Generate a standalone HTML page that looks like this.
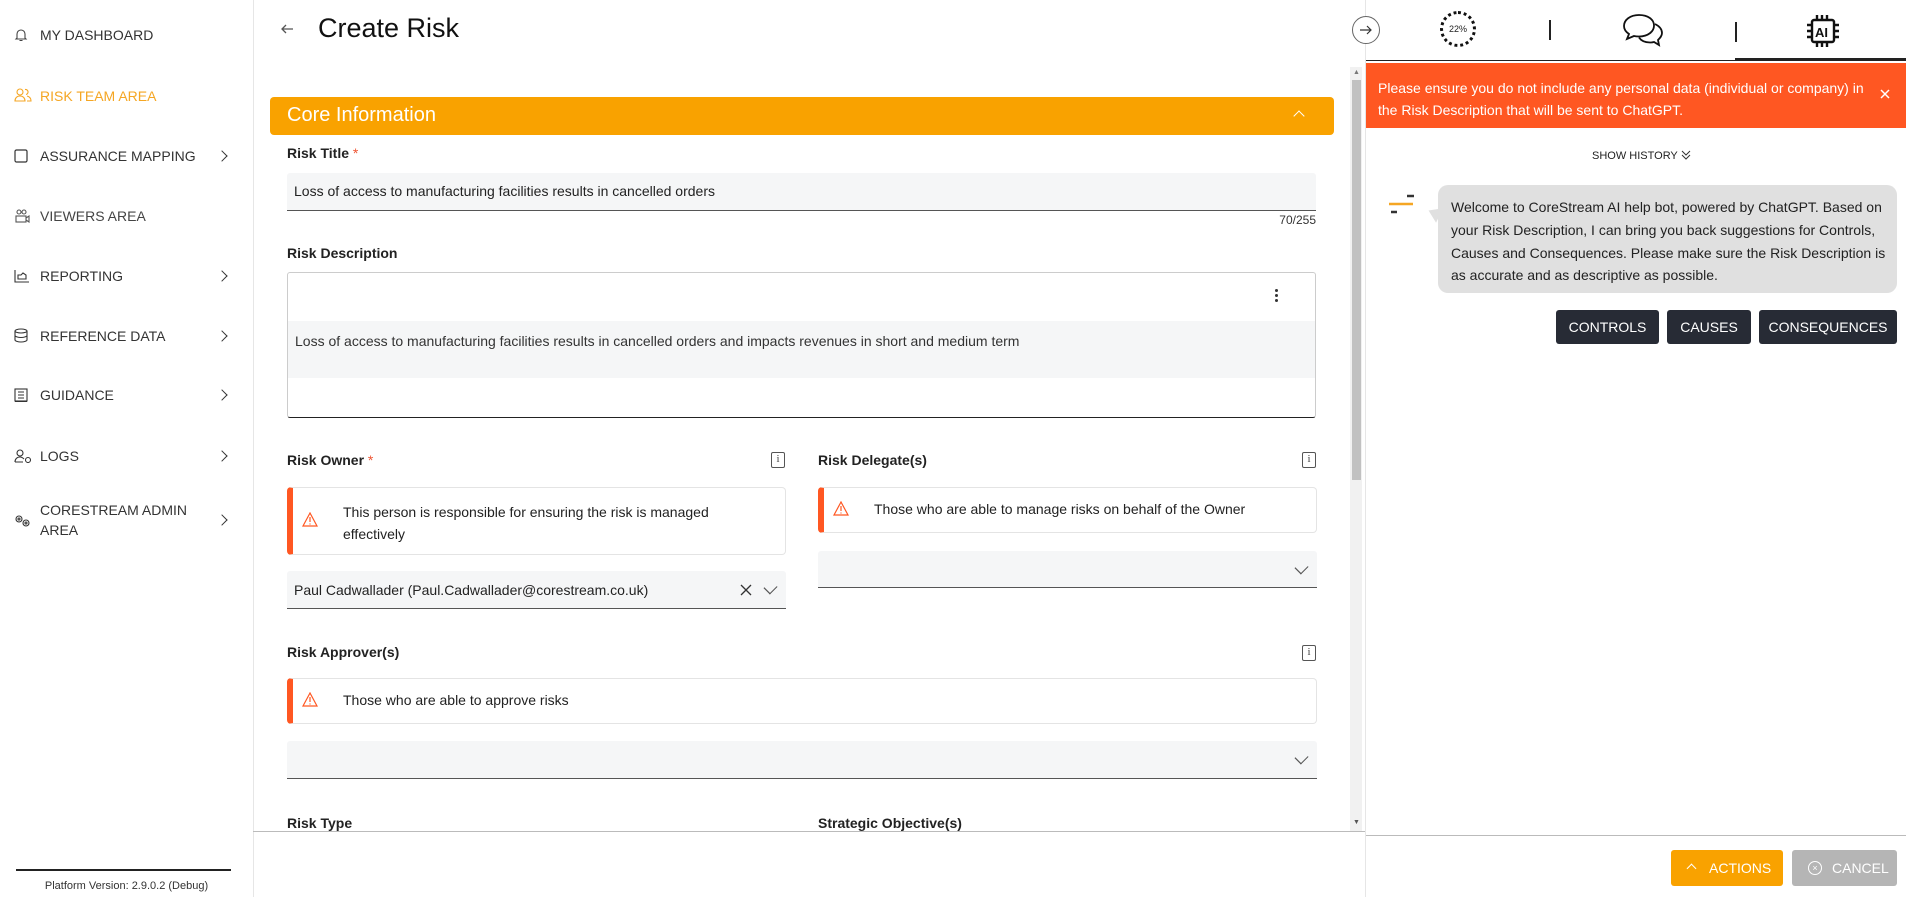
<!DOCTYPE html>
<html><head><meta charset="utf-8"><style>
*{box-sizing:border-box;margin:0;padding:0}
body{width:1906px;height:897px;overflow:hidden;background:#fff;font-family:"Liberation Sans",Arial,sans-serif;color:#222;position:relative}
.a{position:absolute}
.nav{position:absolute;left:40px;font-size:14px;color:#333;letter-spacing:0}
.ico{position:absolute;left:14px}
.chev{position:absolute;left:218px;width:8px;height:8px;border-right:1.5px solid #333;border-top:1.5px solid #333;transform:rotate(45deg)}
.lbl{position:absolute;font-size:14px;font-weight:bold;color:#222}
.inp{position:absolute;background:#f5f6f7;border-bottom:1.5px solid #555;border-radius:3px 3px 0 0}
.warn{position:absolute;border:1px solid #e4e4e4;border-left:6px solid #ff5722;border-radius:4px;background:#fff;font-size:14px;color:#222}
.info{position:absolute;width:14px;height:16px;border:1.3px solid #555;border-radius:2px;font-size:11px;text-align:center;line-height:13px;font-family:"Liberation Serif",serif;color:#444}
.dd{position:absolute;width:9px;height:9px;border-right:1.3px solid #555;border-bottom:1.3px solid #555;transform:rotate(45deg) scaleY(1.2)}
.btn{position:absolute;background:#272b35;color:#fff;font-size:14px;border-radius:3px;text-align:center;line-height:34px}
</style></head><body>

<!-- sidebar -->
<div class="a" style="left:253px;top:0;width:1px;height:897px;background:#e6e6e6"></div>
<svg class="ico" style="top:28px" width="14" height="14" viewBox="0 0 14 14" fill="none" stroke="#444" stroke-width="1.1"><path d="M3 10V6a4 4 0 0 1 8 0v4l1 1H2z M5.5 12.5h3"/></svg>
<div class="nav" style="top:27px">MY DASHBOARD</div>
<svg class="ico" style="top:88px" width="18" height="14" viewBox="0 0 18 14" fill="none" stroke="#f5a623" stroke-width="1.1"><circle cx="6" cy="4" r="3"/><path d="M1 13c0-3 2-5 5-5s5 2 5 5z"/><path d="M11 1.5a2.5 2.5 0 1 1 1 5M13 8c2 .5 4 2 4 5h-4"/></svg>
<div class="nav" style="top:88px;color:#f5a623">RISK TEAM AREA</div>
<svg class="ico" style="top:149px" width="14" height="14"><rect x="1" y="1" width="12" height="12" rx="1.5" fill="none" stroke="#333" stroke-width="1.2"/></svg>
<div class="nav" style="top:148px">ASSURANCE MAPPING</div><div class="chev" style="top:152px"></div>
<svg class="ico" style="top:208px" width="18" height="15" viewBox="0 0 18 15" fill="none" stroke="#555" stroke-width="1.1"><rect x="2" y="8" width="10" height="6"/><path d="M12 10l3-2v6l-3-2"/><circle cx="5" cy="4" r="2"/><circle cx="10" cy="4" r="2"/></svg>
<div class="nav" style="top:208px;color:#444">VIEWERS AREA</div>
<svg class="ico" style="top:269px" width="16" height="14" viewBox="0 0 16 14" fill="none" stroke="#333" stroke-width="1.1"><path d="M1 1v12h14M4 10V6h3l2-2 3 2v4z"/></svg>
<div class="nav" style="top:268px">REPORTING</div><div class="chev" style="top:272px"></div>
<svg class="ico" style="top:328px" width="14" height="15" viewBox="0 0 14 15" fill="none" stroke="#333" stroke-width="1.1"><ellipse cx="7" cy="3" rx="6" ry="2"/><path d="M1 3v9c0 1 3 2 6 2s6-1 6-2V3M1 7.5c0 1 3 2 6 2s6-1 6-2"/></svg>
<div class="nav" style="top:328px">REFERENCE DATA</div><div class="chev" style="top:332px"></div>
<svg class="ico" style="top:388px" width="14" height="15" viewBox="0 0 14 15" fill="none" stroke="#333" stroke-width="1.1"><rect x="1" y="1" width="12" height="12"/><path d="M4 4h6M4 7h6M4 10h6M1 13.5h12"/></svg>
<div class="nav" style="top:387px">GUIDANCE</div><div class="chev" style="top:391px"></div>
<svg class="ico" style="top:449px" width="18" height="14" viewBox="0 0 18 14" fill="none" stroke="#333" stroke-width="1.1"><circle cx="6" cy="4" r="3"/><path d="M1 13c0-3 2-5 5-5 2 0 3 1 4 2M1 13h8"/><circle cx="14" cy="11" r="2.5"/></svg>
<div class="nav" style="top:448px">LOGS</div><div class="chev" style="top:452px"></div>
<svg class="ico" style="top:514px" width="18" height="14" viewBox="0 0 18 14" fill="none" stroke="#333" stroke-width="1.1"><circle cx="5" cy="5" r="3"/><circle cx="12" cy="9" r="3"/><circle cx="5" cy="5" r="1"/><circle cx="12" cy="9" r="1"/></svg>
<div class="nav" style="top:500px;line-height:20px">CORESTREAM ADMIN<br>AREA</div><div class="chev" style="top:516px"></div>
<div class="a" style="left:16px;top:869px;width:215px;height:1.5px;background:#222"></div>
<div class="a" style="left:0;width:253px;top:880px;text-align:center;font-size:11px;color:#333">Platform Version: 2.9.0.2 (Debug)</div>

<!-- main -->
<svg class="a" style="left:280px;top:22px" width="14" height="14" viewBox="0 0 14 14" fill="none" stroke="#555" stroke-width="1.3"><path d="M13 7H2M6 3L2 7l4 4"/></svg>
<div class="a" style="left:318px;top:13px;font-size:27px;color:#111">Create Risk</div>
<div class="a" style="left:270px;top:97px;width:1064px;height:38px;background:#f9a200;border-radius:4px"></div>
<div class="a" style="left:287px;top:104px;font-size:20px;color:#fff">Core Information</div>
<div class="a" style="left:1295px;top:112px;width:8px;height:8px;border-left:1.3px solid #fff;border-top:1.3px solid #fff;transform:rotate(45deg)"></div>

<div class="lbl" style="left:287px;top:145px">Risk Title <span style="color:#e53;font-weight:normal">*</span></div>
<div class="inp" style="left:287px;top:173px;width:1029px;height:38px"></div>
<div class="a" style="left:294px;top:183px;font-size:14px">Loss of access to manufacturing facilities results in cancelled orders</div>
<div class="a" style="left:1270px;top:213px;width:46px;text-align:right;font-size:12px;color:#333">70/255</div>

<div class="lbl" style="left:287px;top:245px">Risk Description</div>
<div class="a" style="left:287px;top:272px;width:1029px;height:146px;border:1px solid #ccc;border-bottom:1.5px solid #222;border-radius:3px"></div>
<div class="a" style="left:1275px;top:289px;width:3px;height:3px;background:#333;border-radius:50%;box-shadow:0 5px 0 #333,0 10px 0 #333"></div>
<div class="a" style="left:288px;top:321px;width:1027px;height:57px;background:#f5f6f7"></div>
<div class="a" style="left:295px;top:333px;font-size:14px;color:#333">Loss of access to manufacturing facilities results in cancelled orders and impacts revenues in short and medium term</div>

<div class="lbl" style="left:287px;top:452px">Risk Owner <span style="color:#e53;font-weight:normal">*</span></div>
<div class="info" style="left:771px;top:452px">i</div>
<div class="lbl" style="left:818px;top:452px">Risk Delegate(s)</div>
<div class="info" style="left:1302px;top:452px">i</div>

<div class="warn" style="left:287px;top:487px;width:499px;height:68px"><div style="position:absolute;left:50px;top:13px;line-height:22px">This person is responsible for ensuring the risk is managed<br>effectively</div></div>
<svg class="a" style="left:302px;top:512px" width="16" height="15" viewBox="0 0 16 15" fill="none" stroke="#ff5722" stroke-width="1.2"><path d="M8 1L1 14h14z M8 5v5 M8 11.5v1"/></svg>
<div class="warn" style="left:818px;top:487px;width:499px;height:46px"><div style="position:absolute;left:50px;top:13px">Those who are able to manage risks on behalf of the Owner</div></div>
<svg class="a" style="left:833px;top:501px" width="16" height="15" viewBox="0 0 16 15" fill="none" stroke="#ff5722" stroke-width="1.2"><path d="M8 1L1 14h14z M8 5v5 M8 11.5v1"/></svg>

<div class="inp" style="left:287px;top:571px;width:499px;height:38px"></div>
<div class="a" style="left:294px;top:582px;font-size:14px">Paul Cadwallader (Paul.Cadwallader@corestream.co.uk)</div>
<svg class="a" style="left:740px;top:584px" width="12" height="12" stroke="#333" stroke-width="1.3"><path d="M1 1l10 10M11 1L1 11"/></svg>
<div class="dd" style="left:766px;top:583px"></div>
<div class="inp" style="left:818px;top:551px;width:499px;height:37px"></div>
<div class="dd" style="left:1297px;top:563px"></div>

<div class="lbl" style="left:287px;top:644px">Risk Approver(s)</div>
<div class="info" style="left:1302px;top:645px">i</div>
<div class="warn" style="left:287px;top:678px;width:1030px;height:46px"><div style="position:absolute;left:50px;top:13px">Those who are able to approve risks</div></div>
<svg class="a" style="left:302px;top:692px" width="16" height="15" viewBox="0 0 16 15" fill="none" stroke="#ff5722" stroke-width="1.2"><path d="M8 1L1 14h14z M8 5v5 M8 11.5v1"/></svg>
<div class="inp" style="left:287px;top:741px;width:1030px;height:38px"></div>
<div class="dd" style="left:1297px;top:753px"></div>

<div class="lbl" style="left:287px;top:815px">Risk Type</div>
<div class="lbl" style="left:818px;top:815px">Strategic Objective(s)</div>

<!-- scrollbar -->
<div class="a" style="left:1350px;top:67px;width:12px;height:764px;background:#f1f1f1"></div>
<div class="a" style="left:1352px;top:80px;width:9px;height:400px;background:#c1c1c1"></div>
<div class="a" style="left:1353px;top:69px;font-size:7px;color:#777">▲</div>
<div class="a" style="left:1353px;top:819px;font-size:7px;color:#555">▼</div>
<div class="a" style="left:253px;top:831px;width:1113px;height:1px;background:#bbb"></div>

<!-- right panel -->
<div class="a" style="left:1365px;top:0;width:1px;height:897px;background:#e6e6e6"></div>
<div class="a" style="left:1352px;top:16px;width:28px;height:28px;border:1px solid #666;border-radius:50%;background:#fff"></div>
<svg class="a" style="left:1359px;top:23px" width="14" height="14" viewBox="0 0 14 14" fill="none" stroke="#333" stroke-width="1.2"><path d="M1 7h11M8 3l4 4-4 4"/></svg>
<div class="a" style="left:1440px;top:11px;width:36px;height:36px;border:3px dotted #111;border-radius:50%;font-size:9px;text-align:center;line-height:30px">22%</div>
<div class="a" style="left:1549px;top:20px;width:1.5px;height:20px;background:#222"></div>
<svg class="a" style="left:1622px;top:13px" width="42" height="34" viewBox="0 0 42 34" fill="none" stroke="#111" stroke-width="1.8"><path d="M17 2C8 2 2 7 2 13c0 3 2 6 5 8l-2 5 7-3c2 .5 3 .5 5 .5 9 0 15-5 15-11S26 2 17 2z"/><path d="M33 11c4 2 7 5 7 9 0 3-2 5-4 7l1 5-5-3c-2 .5-3 .5-4 .5-5 0-9-2-11-5"/></svg>
<div class="a" style="left:1735px;top:22px;width:1.5px;height:20px;background:#222"></div>
<svg class="a" style="left:1806px;top:14px" width="34" height="34" viewBox="0 0 34 34" fill="none" stroke="#111" stroke-width="2.4"><rect x="6" y="6" width="22" height="22" rx="2"/><path d="M11 6V1M16 6V1M21 6V1M11 33v-5M16 33v-5M21 33v-5M6 11H1M6 17H1M6 23H1M33 11h-5M33 17h-5M33 23h-5"/><text x="9" y="23" font-size="13" font-weight="bold" fill="#111" stroke="none" font-family="Liberation Sans">AI</text></svg>
<div class="a" style="left:1366px;top:60px;width:540px;height:1px;background:#222"></div>
<div class="a" style="left:1735px;top:58px;width:171px;height:3px;background:#222"></div>

<div class="a" style="left:1366px;top:63px;width:540px;height:65px;background:#ff5722"></div>
<div class="a" style="left:1378px;top:77px;font-size:14px;color:#fff;line-height:22px">Please ensure you do not include any personal data (individual or company) in<br>the Risk Description that will be sent to ChatGPT.</div>
<svg class="a" style="left:1880px;top:89px" width="10" height="10" stroke="#fff" stroke-width="1.5"><path d="M1 1l8 8M9 1L1 9"/></svg>

<div class="a" style="left:1592px;top:150px;font-size:11px;color:#222">SHOW HISTORY</div>
<svg class="a" style="left:1681px;top:150px" width="10" height="11" fill="none" stroke="#333" stroke-width="1"><path d="M1 1l4 4 4-4M1 5l4 4 4-4"/></svg>

<svg class="a" style="left:1388px;top:194px" width="30" height="22"><path d="M19 2h7" stroke="#333" stroke-width="2.5"/><path d="M1 10h24" stroke="#f5a623" stroke-width="2.5"/><path d="M3 18h6" stroke="#333" stroke-width="2.5"/></svg>
<div class="a" style="left:1428px;top:205px;width:0;height:0;border-top:8px solid transparent;border-bottom:8px solid transparent;border-right:12px solid #e0e0e0;transform:rotate(25deg)"></div>
<div class="a" style="left:1438px;top:185px;width:459px;height:108px;background:#e0e0e0;border-radius:10px"></div>
<div class="a" style="left:1451px;top:196px;font-size:14px;line-height:22.8px;color:#222;width:440px">Welcome to CoreStream AI help bot, powered by ChatGPT. Based on your Risk Description, I can bring you back suggestions for Controls, Causes and Consequences. Please make sure the Risk Description is as accurate and as descriptive as possible.</div>
<div class="btn" style="left:1556px;top:310px;width:103px">CONTROLS</div>
<div class="btn" style="left:1667px;top:310px;width:84px">CAUSES</div>
<div class="btn" style="left:1759px;top:310px;width:138px">CONSEQUENCES</div>

<div class="a" style="left:1366px;top:835px;width:540px;height:1px;background:#bbb"></div>
<div class="a" style="left:1671px;top:850px;width:112px;height:36px;background:#f9a200;border-radius:3px;color:#fff;font-size:14px;line-height:36px;padding-left:38px">ACTIONS</div>
<div class="a" style="left:1688px;top:865px;width:7px;height:7px;border-left:1.3px solid #fff;border-top:1.3px solid #fff;transform:rotate(45deg)"></div>
<div class="a" style="left:1792px;top:850px;width:105px;height:36px;background:#b5b5b5;border-radius:3px;color:#fff;font-size:14px;line-height:36px;padding-left:40px">CANCEL</div>
<div class="a" style="left:1808px;top:861px;width:14px;height:14px;border:1.2px solid #fff;border-radius:50%;color:#fff;font-size:9px;text-align:center;line-height:12px">×</div>
</body></html>
